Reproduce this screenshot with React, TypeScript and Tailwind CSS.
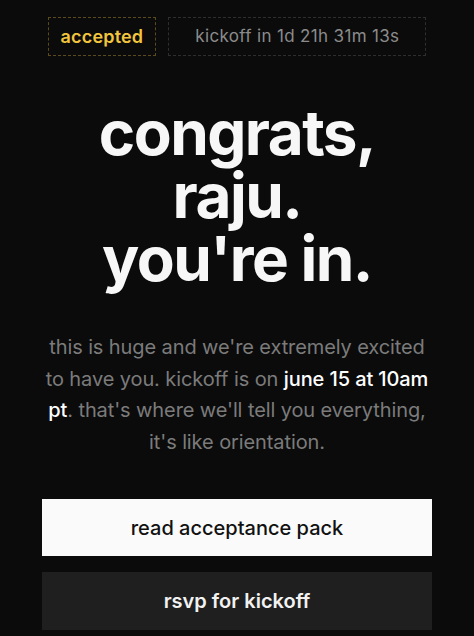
export default function App() {
  return (
    <div
      className="min-h-[636px] w-full bg-[#0b0b0c] px-[42px] pt-[17px] text-white"
      style={{ fontFamily: 'Inter, "Noto Sans", sans-serif' }}
    >
      <div className="flex items-center justify-center gap-3">
        <span className="flex h-[39px] items-center border border-dashed border-[#5a4a1c] px-3 text-[18px] font-semibold tracking-[0.01em] text-[#f2c53d]">
          accepted
        </span>
        <span className="flex h-[39px] items-center border border-dashed border-[#2e2e30] px-[26px] text-[17px] tracking-[0.02em] text-[#8b8b8b]">
          kickoff in 1d 21h 31m 13s
        </span>
      </div>

      <h1 className="mt-[45px] text-center text-[62px] font-bold leading-[63px] tracking-[-0.025em] text-[#f7f7f7]">
        congrats,
        <br />
        raju.
        <br />
        you're in.
      </h1>

      <p className="mx-auto mt-[42px] text-center text-[20px] leading-[31.5px] tracking-[-0.005em] text-[#7b7b7b]">
        this is huge and we're extremely excited
        <br />
        to have you. kickoff is on <span className="font-medium text-white">june 15 at 10am</span>
        <br />
        <span className="font-medium text-white">pt</span>. that's where we'll tell you everything,
        <br />
        it's like orientation.
      </p>

      <div className="mt-[41px] flex flex-col gap-4">
        <button className="h-[57px] w-full bg-[#fafafa] text-[20px] font-medium text-[#111]">
          read acceptance pack
        </button>
        <button className="h-[58px] w-full bg-[#1f1f1f] text-[20px] font-semibold text-[#f2f2f2]">
          rsvp for kickoff
        </button>
      </div>
    </div>
  )
}
